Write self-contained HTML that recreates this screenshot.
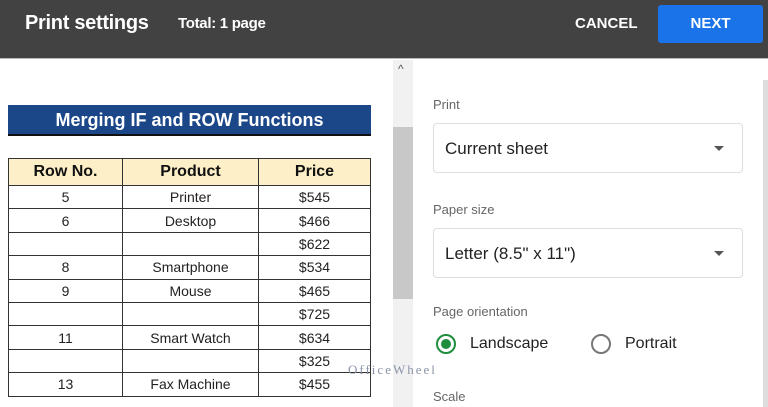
<!DOCTYPE html>
<html><head><style>
*{margin:0;padding:0;box-sizing:border-box}
body{width:768px;height:407px;overflow:hidden;background:#fff;font-family:"Liberation Sans",Arial,sans-serif;position:relative}
.hdr{position:absolute;left:0;top:0;width:768px;height:59px;background:#424242;border-bottom:1px solid #bbb}
.a{position:absolute}
.t{color:#fff}
table{border-collapse:collapse;position:absolute;left:8px;top:158px;width:363px;font-size:14px}
td{border:1.5px solid #333;text-align:center;height:23.4px;padding:0;color:#222}
th{border:1.5px solid #333;background:#fdf0c8;height:27px;font-size:16px;color:#111}
.lbl{position:absolute;left:433px;font-size:13px;color:#666}
.sel{position:absolute;left:433px;width:310px;height:50px;border:1px solid #ddd;border-radius:4px;font-size:17px;color:#222;padding:15px 0 0 11px}
.sel:after{content:"";position:absolute;right:18px;top:22px;border-left:5px solid transparent;border-right:5px solid transparent;border-top:5px solid #555}
</style></head><body>
<div class="hdr"></div>
<div class="a t" style="left:25px;top:12px;font-size:20px;font-weight:bold;letter-spacing:-0.3px">Print settings</div>
<div class="a t" style="left:178px;top:15px;font-size:15px;font-weight:bold;letter-spacing:-0.3px">Total: 1 page</div>
<div class="a t" style="left:575px;top:15px;font-size:15px;font-weight:bold">CANCEL</div>
<div class="a t" style="left:658px;top:5px;width:105px;height:38px;background:#1a73e8;border-radius:3px;font-size:15px;font-weight:bold;text-align:center;line-height:38px">NEXT</div>
<div class="a" style="left:393px;top:60px;width:20px;height:347px;background:#f1f1f1"></div>
<div class="a" style="left:393px;top:127px;width:20px;height:172px;background:#c8c8c8"></div>
<div class="a" style="left:398px;top:62px;font-size:12px;color:#555">&#94;</div>
<div class="a" style="left:763px;top:80px;width:5px;height:327px;background:#ddd"></div>
<div class="a" style="left:8px;top:105px;width:363px;height:31px;background:#1b4789;border-bottom:2px solid #111;color:#fff;font-weight:bold;font-size:18px;text-align:center;line-height:30px">Merging IF and ROW Functions</div>
<table>
<tr><th style="width:114px">Row No.</th><th style="width:136px">Product</th><th>Price</th></tr>
<tr><td>5</td><td>Printer</td><td>$545</td></tr>
<tr><td>6</td><td>Desktop</td><td>$466</td></tr>
<tr><td></td><td></td><td>$622</td></tr>
<tr><td>8</td><td>Smartphone</td><td>$534</td></tr>
<tr><td>9</td><td>Mouse</td><td>$465</td></tr>
<tr><td></td><td></td><td>$725</td></tr>
<tr><td>11</td><td>Smart Watch</td><td>$634</td></tr>
<tr><td></td><td></td><td>$325</td></tr>
<tr><td>13</td><td>Fax Machine</td><td>$455</td></tr>
</table>
<div class="a" style="left:348px;top:362px;font-family:'Liberation Serif',serif;font-size:13px;letter-spacing:2px;color:#8a93a8">OfficeWheel</div>
<div class="lbl" style="top:97px">Print</div>
<div class="sel" style="top:123px">Current sheet</div>
<div class="lbl" style="top:202px">Paper size</div>
<div class="sel" style="top:228px">Letter (8.5" x 11")</div>
<div class="lbl" style="top:304px">Page orientation</div>
<div class="a" style="left:436px;top:334px;width:20px;height:20px;border:2px solid #1e8e3e;border-radius:50%"><div style="margin:3px;width:10px;height:10px;background:#1e8e3e;border-radius:50%"></div></div>
<div class="a" style="left:470px;top:335px;font-size:16px;color:#222">Landscape</div>
<div class="a" style="left:591px;top:334px;width:20px;height:20px;border:2px solid #777;border-radius:50%"></div>
<div class="a" style="left:625px;top:335px;font-size:16px;color:#222">Portrait</div>
<div class="lbl" style="top:389px">Scale</div>
</body></html>
